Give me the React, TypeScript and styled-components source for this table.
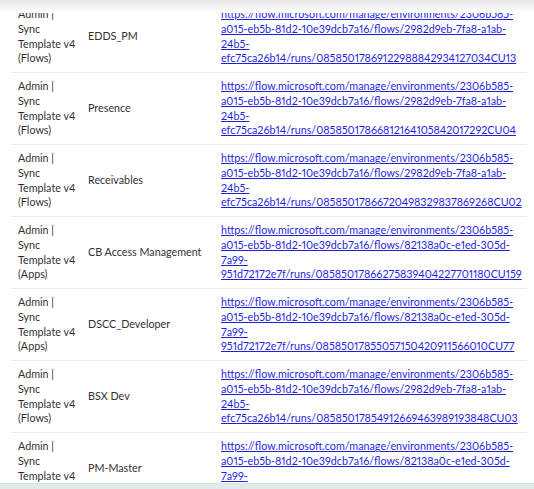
import React from "react";
import styled, { createGlobalStyle } from "styled-components";

const GlobalStyle = createGlobalStyle`
  html, body { margin: 0; padding: 0; background: #ffffff; }
  #root { width: 534px; height: 489px; }
`;

const Page = styled.div`
  width: 534px;
  height: 489px;
  display: flex;
  flex-direction: column;
  overflow: hidden;
  font-family: "Lato", "Liberation Sans", sans-serif;
  font-size: 10.75px;
  font-variant-numeric: proportional-nums;
  line-height: 14.75px;
  color: #323130;
`;

const TopShade = styled.div`
  height: 13px;
  flex-shrink: 0;
  background: linear-gradient(to bottom, #e4e4e4 0%, #efefef 35%, #fbfbfb 80%, #ffffff 100%);
`;

const Body = styled.div`
  flex: 1;
  min-height: 0;
  display: flex;
`;

const Table = styled.div`
  flex: 1;
  margin-left: 11px;
  overflow: hidden;
`;

const Scroller = styled.div`
  margin-top: -12px;
`;

const RightGutter = styled.div`
  width: 7px;
  flex-shrink: 0;
  background: #ffffff;
`;

const Row = styled.div`
  display: grid;
  grid-template-columns: 70px 133px 1fr;
  border-bottom: 1px solid #edebe9;
`;

const Cell = styled.div<{ $center?: boolean }>`
  padding: 6px 7px;
  display: flex;
  align-items: ${(p) => (p.$center ? "center" : "flex-start")};
  white-space: nowrap;
`;

const Link = styled.a`
  color: #1f1fe0;
  text-decoration: underline;
  white-space: nowrap;
`;

const BottomBar = styled.div`
  height: 5px;
  flex-shrink: 0;
  background: #e3eaea;
  border-top: 1px solid #d9e0e0;
`;

const ENV = "https://flow.microsoft.com/manage/environments/2306b585-";
const FLOW_A = { l2: "a015-eb5b-81d2-10e39dcb7a16/flows/2982d9eb-7fa8-a1ab-", l3: "24b5-", l4: "efc75ca26b14" };
const FLOW_B = { l2: "a015-eb5b-81d2-10e39dcb7a16/flows/82138a0c-e1ed-305d-", l3: "7a99-", l4: "951d72172e7f" };

const rows: { kind: string; name: string; flow: typeof FLOW_A; run: string }[] = [
  { kind: "(Flows)", name: "EDDS_PM", flow: FLOW_A, run: "08585017869122988842934127034CU13" },
  { kind: "(Flows)", name: "Presence", flow: FLOW_A, run: "08585017866812164105842017292CU04" },
  { kind: "(Flows)", name: "Receivables", flow: FLOW_A, run: "08585017866720498329837869268CU02" },
  { kind: "(Apps)", name: "CB Access Management", flow: FLOW_B, run: "08585017866275839404227701180CU159" },
  { kind: "(Apps)", name: "DSCC_Developer", flow: FLOW_B, run: "08585017855057150420911566010CU77" },
  { kind: "(Flows)", name: "BSX Dev", flow: FLOW_A, run: "08585017854912669463989193848CU03" },
  { kind: "(Apps)", name: "PM-Master", flow: FLOW_B, run: "08585017853921746630512908437CU41" },
];

export default function App() {
  return (
    <>
      <GlobalStyle />
      <Page>
        <TopShade />
        <Body>
          <Table>
            <Scroller>
              {rows.map((r, i) => {
                const url = `${ENV}${r.flow.l2}${r.flow.l3}${r.flow.l4}/runs/${r.run}`;
                return (
                  <Row key={i}>
                    <Cell>
                      <span>
                        Admin |<br />
                        Sync<br />
                        Template v4<br />
                        {r.kind}
                      </span>
                    </Cell>
                    <Cell $center>{r.name}</Cell>
                    <Cell>
                      <Link href={url}>
                        {ENV}
                        <br />
                        {r.flow.l2}
                        <br />
                        {r.flow.l3}
                        <br />
                        {r.flow.l4}/runs/{r.run}
                      </Link>
                    </Cell>
                  </Row>
                );
              })}
            </Scroller>
          </Table>
          <RightGutter />
        </Body>
        <BottomBar />
      </Page>
    </>
  );
}
